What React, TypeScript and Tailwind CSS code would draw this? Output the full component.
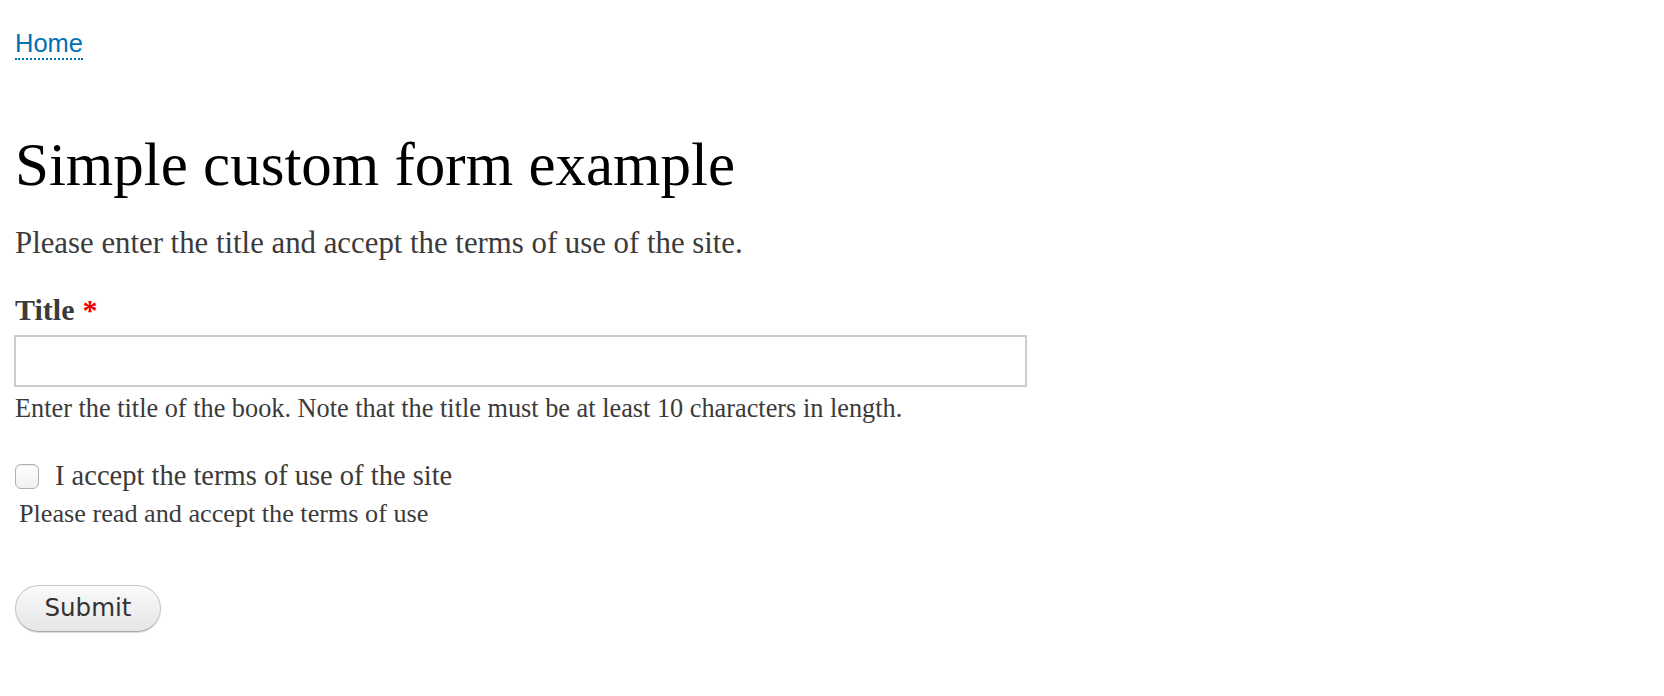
import React, { useState } from 'react';

const serif = "font-['Liberation_Serif','Times_New_Roman',serif]";

const App = () => {
  const [title, setTitle] = useState('');
  const [accepted, setAccepted] = useState(false);

  return (
    <div className="min-h-screen bg-white pl-[15px] pt-[28px] text-[#3b3b3b]">
      <nav>
        <a
          href="#"
          className="inline-block border-b-2 border-dotted border-[#0071b3] font-['Liberation_Sans',Arial,sans-serif] text-[25.5px] leading-[30px] text-[#0071b3]"
        >
          Home
        </a>
      </nav>

      <h1 className={`${serif} mt-[70px] text-[61px] leading-[70px] font-normal text-black`}>
        Simple custom form example
      </h1>

      <p className={`${serif} mt-[25px] text-[30.8px] leading-[36px]`}>
        Please enter the title and accept the terms of use of the site.
      </p>

      <form onSubmit={e => e.preventDefault()}>
        <label htmlFor="edit-title" className={`${serif} mt-[31px] block text-[30px] leading-[36px] font-bold`}>
          Title
          <span className="ml-[8px] font-bold text-[#e00]">*</span>
        </label>
        <input
          id="edit-title"
          type="text"
          value={title}
          onChange={e => setTitle(e.target.value)}
          className="mt-[7px] -ml-px block h-[52px] w-[1013px] border-2 border-[#cccccc] bg-white px-2 outline-none"
        />
        <div className={`${serif} mt-[6px] text-[26.3px] leading-[32px]`}>
          Enter the title of the book. Note that the title must be at least 10 characters in length.
        </div>

        <div className="mt-[34px] flex items-start">
          <input
            id="edit-accept"
            type="checkbox"
            checked={accepted}
            onChange={e => setAccepted(e.target.checked)}
            className="mt-[5px] h-[25px] w-[24px] appearance-none rounded-[6px] border border-[#b0b0b0] bg-gradient-to-b from-white to-[#f0f0f0] shadow-[inset_0_1px_1px_rgba(0,0,0,0.08)] checked:bg-[#3b82f6]"
          />
          <label htmlFor="edit-accept" className={`${serif} ml-[16px] text-[28.5px] leading-[34px]`}>
            I accept the terms of use of the site
          </label>
        </div>
        <div className={`${serif} mt-[5px] pl-[4px] text-[26.2px] leading-[32px]`}>
          Please read and accept the terms of use
        </div>

        <button
          type="submit"
          className="mt-[55px] flex h-[47px] w-[146px] items-center justify-center rounded-full border border-[#c6c6c6] border-b-[#a9a9a9] bg-gradient-to-b from-[#fafafa] to-[#e6e6e6] font-['DejaVu_Sans',sans-serif] text-[24.5px] leading-none text-[#333] shadow-[0_1px_1px_rgba(0,0,0,0.15)]"
        >
          Submit
        </button>
      </form>
    </div>
  );
};

export default App;
